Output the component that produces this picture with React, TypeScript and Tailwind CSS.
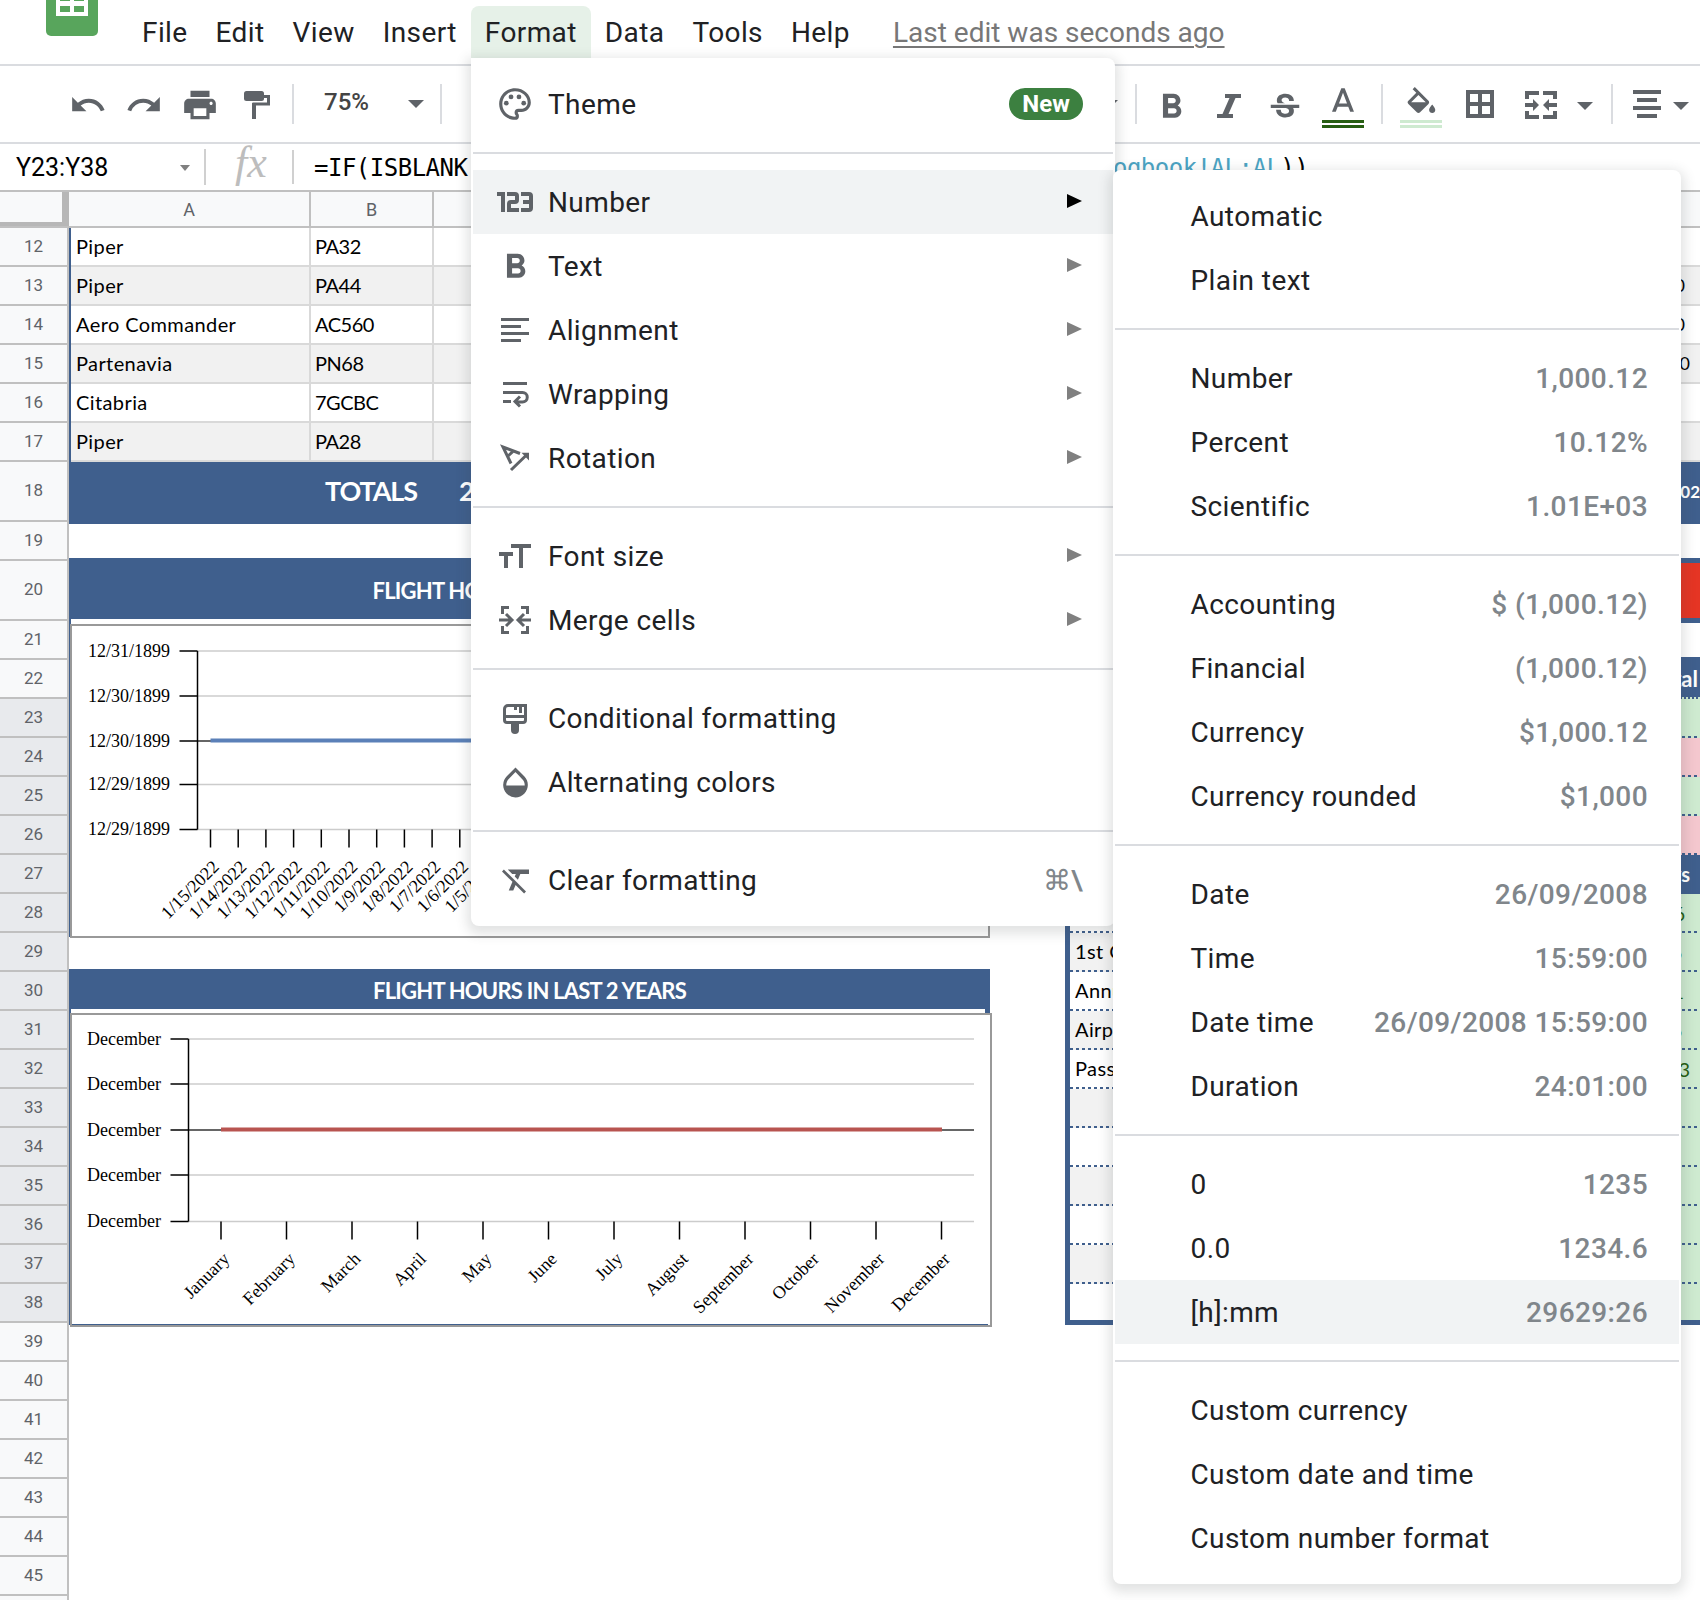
import type { ReactNode } from "react"
import {
    MdFormatBold,
    MdFormatClear,
    MdFormatColorFill,
    MdOpacity,
    MdOutlinePalette,
    MdPrint,
    MdRedo,
    MdStrikethroughS,
    MdUndo,
} from "react-icons/md"

const menuNames = ["File", "Edit", "View", "Insert", "Format", "Data", "Tools", "Help"]

const aircraft = [
    { row: 12, make: "Piper", model: "PA32", hours: "", pad: "" },
    { row: 13, make: "Piper", model: "PA44", hours: "0.0", pad: "pr-[15px]" },
    { row: 14, make: "Aero Commander", model: "AC560", hours: "0.0", pad: "pr-[15px]" },
    { row: 15, make: "Partenavia", model: "PN68", hours: "0.0", pad: "pr-[10px]" },
    { row: 16, make: "Citabria", model: "7GCBC", hours: "", pad: "" },
    { row: 17, make: "Piper", model: "PA28", hours: "", pad: "" },
]

const rowNumbers = Array.from({ length: 34 }, (_, i) => i + 12)

const currency = [
    { row: 23, label: "", value: "", pad: "", fill: "bg-[#ceead0]" },
    { row: 24, label: "", value: "", pad: "", fill: "bg-[#f4c7ce]" },
    { row: 25, label: "", value: "", pad: "", fill: "bg-[#ceead0]" },
    { row: 26, label: "", value: "", pad: "", fill: "bg-[#f4c7ce]" },
    { row: 27, label: "", value: "Days", pad: "pr-[10px]", fill: "bg-[#3f5f8d] text-white font-bold" },
    { row: 28, label: "", value: "6", pad: "pr-[15px]", fill: "bg-[#ceead0]" },
    { row: 29, label: "1st Class", value: "6", pad: "pr-[18px]", fill: "bg-[#ceead0]" },
    { row: 30, label: "Annual", value: "1", pad: "pr-[16px]", fill: "bg-[#ceead0]" },
    { row: 31, label: "Airport", value: "6", pad: "pr-[18px]", fill: "bg-[#ceead0]" },
    { row: 32, label: "Passport", value: "3", pad: "pr-[10px]", fill: "bg-[#ceead0]" },
    { row: 33, label: "", value: "", pad: "", fill: "bg-[#ceead0]" },
    { row: 34, label: "", value: "", pad: "", fill: "bg-[#ceead0]" },
    { row: 35, label: "", value: "", pad: "", fill: "bg-[#ceead0]" },
    { row: 36, label: "", value: "", pad: "", fill: "bg-[#ceead0]" },
    { row: 37, label: "", value: "", pad: "", fill: "bg-[#ceead0]" },
]

const numberFormats = [
    [["Automatic", ""], ["Plain text", ""]],
    [["Number", "1,000.12"], ["Percent", "10.12%"], ["Scientific", "1.01E+03"]],
    [["Accounting", "$ (1,000.12)"], ["Financial", "(1,000.12)"], ["Currency", "$1,000.12"], ["Currency rounded", "$1,000"]],
    [["Date", "26/09/2008"], ["Time", "15:59:00"], ["Date time", "26/09/2008 15:59:00"], ["Duration", "24:01:00"]],
    [["0", "1235"], ["0.0", "1234.6"], ["[h]:mm", "29629:26"]],
    [["Custom currency", ""], ["Custom date and time", ""], ["Custom number format", ""]],
]

function MenuIcon({ children }: { children: ReactNode }) {
    return (
        <svg width="40" height="40" viewBox="0 0 40 40" fill="none" stroke="currentColor" strokeWidth="3">
            {children}
        </svg>
    )
}

const icons = {
    number: (
        <MenuIcon>
            <path d="M2 12h6v18M12 12h8q2 0 2 2v4q0 2-2 2h-4q-2 0-2 2v6h10M26 12h8q2 0 2 2v12q0 2-2 2h-8M28 20h8" strokeWidth="4" />
        </MenuIcon>
    ),
    align: (
        <MenuIcon>
            <path d="M6 9.500h28M6 16.500h20M6 23.500h28M6 30.500h20" />
        </MenuIcon>
    ),
    wrap: (
        <MenuIcon>
            <path d="M8 9.500h24M8 18.500h19.500a4.500 4.500 0 0 1 0 9.500H20M8 27.500h8M25 22.500l-5 5 5 5" />
        </MenuIcon>
    ),
    rotation: (
        <MenuIcon>
            <path d="M16 25.500L8 9l17 6.500M12.500 18.500l6-5.500M16 32L31 17.500" />
            <path d="M26.500 14.700H34V22.500z" fill="currentColor" stroke="none" />
        </MenuIcon>
    ),
    size: (
        <MenuIcon>
            <path d="M16 10h20M26 10v22M4 18h14M11 18v14" strokeWidth="4" />
        </MenuIcon>
    ),
    merge: (
        <MenuIcon>
            <path d="M7.500 14V7.500H14M26 7.500h6.500V14M7.500 26v6.500H14M26 32.500h6.500V26M4 20h13M11 14l6 6-6 6M36 20H23M29 14l-6 6 6 6" />
        </MenuIcon>
    ),
    brush: (
        <MenuIcon>
            <path d="M30.500 7.500H13a3.500 3.500 0 0 0-3.500 3.500v11q0 2.500 2.500 2.500h16q2.500 0 2.500-2.500zM9.500 18.500h21M20.500 7v5M25.500 7v8" />
            <path d="M16 25h8v7a4 4 0 0 1-8 0z" fill="currentColor" stroke="none" />
        </MenuIcon>
    ),
}

function Divider() {
    return <div className="my-4 h-0.5 bg-[#dadce0]" />
}

function FormatItem({ icon, label, active, end }: { icon: ReactNode; label: string; active?: boolean; end?: ReactNode }) {
    return (
        <div className={`flex h-16 items-center pl-[22px] pr-[31px] ${active ? "bg-[#f1f3f4]" : ""}`}>
            <div className="flex w-10 justify-center text-[#5f6368]">{icon}</div>
            <span className="ml-[13px] flex-1 pt-0.5">{label}</span>
            {end !== undefined ? end : (
                <svg width="15" height="14" viewBox="0 0 15 14" className={`-mt-[3px] ${active ? "text-black" : "text-[#808080]"}`}>
                    <path d="M0 0l15 7-15 7z" fill="currentColor" />
                </svg>
            )}
        </div>
    )
}

function FormatMenu() {
    return (
        <div className="absolute left-[471px] top-[58px] z-10 w-[644px] rounded-b-lg rounded-tr-lg bg-white px-0.5 py-3.5 text-[28px] tracking-[0.4px] text-[#202124] shadow-[0_4px_12px_4px_rgba(60,64,67,0.15)]">
            <FormatItem
                icon={<MdOutlinePalette size={38} />}
                label="Theme"
                end={<span className="-mr-px flex h-8 w-[74px] items-center justify-center rounded-full bg-[#3c8040] text-2xl font-bold tracking-normal text-white">New</span>}
            />
            <Divider />
            <FormatItem icon={icons.number} label="Number" active />
            <FormatItem icon={<MdFormatBold size={41} className="mt-0.5 shrink-0" />} label="Text" />
            <FormatItem icon={icons.align} label="Alignment" />
            <FormatItem icon={icons.wrap} label="Wrapping" />
            <FormatItem icon={icons.rotation} label="Rotation" />
            <Divider />
            <FormatItem icon={icons.size} label="Font size" />
            <FormatItem icon={icons.merge} label="Merge cells" />
            <Divider />
            <FormatItem icon={icons.brush} label="Conditional formatting" end={null} />
            <FormatItem icon={<MdOpacity size={37} />} label="Alternating colors" end={null} />
            <Divider />
            <FormatItem
                icon={<MdFormatClear size={36} className="ml-1" />}
                label="Clear formatting"
                end={<span className="-mr-px pt-0.5 font-medium text-[#80868b]">⌘\</span>}
            />
        </div>
    )
}

function NumberMenu() {
    return (
        <div className="absolute left-[1113px] top-[170px] z-20 w-[568px] rounded-lg bg-white px-0.5 py-3.5 text-[28px] tracking-[0.4px] text-[#202124] shadow-[0_4px_12px_4px_rgba(60,64,67,0.15)]">
            {numberFormats.map((group, i) => (
                <div key={i}>
                    {i > 0 && <Divider />}
                    {group.map(([label, sample]) => (
                        <div key={label} className={`flex h-16 items-center justify-between pl-[75.5px] pr-[31px] pt-0.5 ${label === "[h]:mm" ? "bg-[#f1f3f4]" : ""}`}>
                            <span>{label}</span>
                            <span className="font-medium text-[#80868b]">{sample}</span>
                        </div>
                    ))}
                </div>
            ))}
        </div>
    )
}

function Caret({ className }: { className: string }) {
    return (
        <svg width="16" height="8" viewBox="0 0 16 8" className={`shrink-0 ${className}`}>
            <path d="M0 0h16L8 8z" fill="currentColor" />
        </svg>
    )
}

function Separator({ className }: { className: string }) {
    return <div className={`h-10 w-0.5 shrink-0 bg-[#dadce0] ${className}`} />
}

function MenuBar() {
    return (
        <div className="flex h-[66px] border-b-2 border-[#dadce0]">
            <svg width="52" height="36" viewBox="0 0 52 36" className="ml-[46px]">
                <path d="M0 0h52v31a5 5 0 0 1-5 5H5a5 5 0 0 1-5-5z" fill="#58a55c" />
                <path d="M10 0h32v16H10z" fill="#fff" />
                <path d="M14 0h10v1H14zM28 0h10v1H28zM14 6h10v6H14zM28 6h10v6H28z" fill="#58a55c" />
            </svg>
            <div className="ml-[30px] mt-1.5 flex text-[28px] tracking-[0.4px] text-[#202124]">
                {menuNames.map((name) => (
                    <div key={name} className={`flex h-[58px] items-center px-3.5 pb-[5px] ${name === "Format" ? "rounded-t-lg bg-[#e6f1e8]" : ""}`}>
                        {name}
                    </div>
                ))}
            </div>
            <div className="ml-[29px] mt-3 text-[28px] text-[#777] underline decoration-2 underline-offset-4">Last edit was seconds ago</div>
        </div>
    )
}

function ColorBars({ color }: { color: string }) {
    return (
        <div className="flex flex-col gap-0.5">
            <div className={`h-[3px] w-[42px] ${color}`} />
            <div className={`h-[3px] w-[42px] ${color}`} />
        </div>
    )
}

function Toolbar() {
    return (
        <div className="flex h-[78px] items-center border-b-2 border-[#dadce0] text-[#5f6368]">
            <MdUndo size={38} className="ml-[69px] mt-0.5" />
            <MdRedo size={38} className="ml-[18px] mt-0.5" />
            <MdPrint size={38} className="ml-[18px] mt-0.5" />
            <svg width="26" height="28" viewBox="0 0 26 28" className="ml-[25px] mt-0.5">
                <rect width="20" height="10" rx="2.500" fill="currentColor" />
                <path d="M20 5.500h4.500V13H10v15" fill="none" stroke="currentColor" strokeWidth="3" />
                <path d="M8 12h4v16H8z" fill="currentColor" />
            </svg>
            <Separator className="ml-[22px]" />
            <span className="-mt-1 ml-[30px] w-[46px] text-2xl font-medium text-[#444]">75%</span>
            <Caret className="ml-[38px]" />
            <Separator className="ml-4" />
            <Caret className="ml-[660px]" />
            <Separator className="ml-[17px]" />
            <MdFormatBold size={41} className="ml-[14px] mt-[7px]" />
            <svg width="24" height="24" viewBox="0 0 24 24" className="ml-[25px] mt-[3px]">
                <path d="M8 0h16v4h-5.500l-7 16H16v4H0v-4h5.500l7-16H8z" fill="currentColor" />
            </svg>
            <MdStrikethroughS size={38} className="ml-[25px] mt-[7px]" />
            <div className="ml-[18px] mt-[7px] flex flex-col items-center gap-2">
                <svg width="22" height="24" viewBox="5.500 3 13 14">
                    <path d="M11 3L5.500 17h2.250l1.120-3h6.250l1.120 3h2.250L13 3h-2zm-1.380 9L12 5.670 14.380 12H9.620z" fill="currentColor" />
                </svg>
                <ColorBars color="bg-[#275e12]" />
            </div>
            <Separator className="ml-[17px]" />
            <div className="ml-[17px] mt-1.5 flex h-[41px] flex-col items-center justify-between">
                <MdFormatColorFill size={37} className="h-[26px] shrink-0" viewBox="0 0 24 17" />
                <ColorBars color="bg-[#ceead0]" />
            </div>
            <svg width="28" height="28" viewBox="0 0 28 28" fill="none" stroke="currentColor" strokeWidth="4" className="ml-6">
                <path d="M2 2h24v24H2zM14 2v24M2 14h24" />
            </svg>
            <svg width="32" height="28" viewBox="0 0 32 28" fill="none" stroke="currentColor" strokeWidth="4" className="ml-[31px] mt-0.5">
                <path d="M2 8V2h12M18 2h12v6M2 20v6h12M18 26h12v-6M0 14h9M32 14h-9" />
                <path d="M8 8l6 6-6 6zM24 8l-6 6 6 6z" fill="currentColor" stroke="none" />
            </svg>
            <Caret className="ml-5 mt-1" />
            <Separator className="ml-[18px]" />
            <svg width="28" height="28" viewBox="0 0 28 28" fill="none" stroke="currentColor" strokeWidth="4" className="ml-5">
                <path d="M0 2h28M4 10h20M0 18h28M4 26h20" />
            </svg>
            <Caret className="ml-3 mt-1" />
        </div>
    )
}

function FormulaBar() {
    return (
        <div className="flex h-12 items-center border-b-2 border-[#c0c0c0] text-black">
            <span className="ml-4 w-[164px] text-[25px] leading-none">Y23:Y38</span>
            <svg width="10" height="6" viewBox="0 0 10 6" className="mt-0.5 text-[#808080]">
                <path d="M0 0h10L5 6z" fill="currentColor" />
            </svg>
            <div className="ml-3.5 h-9 w-0.5 bg-[#d0d0d0]" />
            <span className="ml-[29px] w-[57px] pb-2 font-['Liberation_Serif',serif] text-[44px] italic leading-none text-[#bdbdbd]">fx</span>
            <div className="h-[34px] w-0.5 bg-[#d0d0d0]" />
            <span className="ml-5 w-[785px] whitespace-nowrap pt-0.5 font-['DejaVu_Sans_Mono',monospace] text-[24px] leading-none tracking-[-0.5px]">=IF(ISBLANK</span>
            <span className="whitespace-nowrap pt-0.5 font-['DejaVu_Sans_Mono',monospace] text-[24px] leading-none tracking-[-0.5px]">
                <span className="text-[#4ba3c3]">Logbook!AL:AL</span>))
            </span>
        </div>
    )
}

function rowHeight(row: number) {
    return row === 18 || row === 20 ? "h-[60px]" : "h-[39px]"
}

function RowHeaders() {
    return (
        <div className="w-[69px] shrink-0 border-r-2 border-[#c0c0c0] bg-[#f8f9fa] text-[17px] text-[#5f6368]">
            {rowNumbers.map((row) => (
                <div
                    key={row}
                    className={`flex items-center justify-center border-b-2 border-[#c0c0c0] ${rowHeight(row)} ${row > 22 && row < 39 ? "bg-[#e8eaed]" : ""}`}
                >
                    {row}
                </div>
            ))}
        </div>
    )
}

const dateTicks = ["1/15/2022", "1/14/2022", "1/13/2022", "1/12/2022", "1/11/2022", "1/10/2022", "1/9/2022", "1/8/2022", "1/7/2022", "1/6/2022", "1/5/2022"]
const months = ["January", "February", "March", "April", "May", "June", "July", "August", "September", "October", "November", "December"]

type ChartProps = {
    height: number
    labels: string[]
    ys: number[]
    axisX: number
    gridEnd: number
    ticks: string[]
    tickStart: number
    tickStep: number
    seriesEnd: number
    color: string
}

function LineChart({ height, labels, ys, axisX, gridEnd, ticks, tickStart, tickStep, seriesEnd, color }: ChartProps) {
    const bottom = ys[4]
    return (
        <svg width="917" height={height} className="font-['Liberation_Serif',serif] text-[18px]" fill="#000">
            {ys.map((y, i) => (
                <g key={i}>
                    <line x1={axisX} x2={gridEnd} y1={y} y2={y} stroke={i === 2 ? "#333" : "#ccc"} strokeWidth="1.500" />
                    <line x1={axisX - 18} x2={axisX} y1={y} y2={y} stroke="#000" strokeWidth="1.500" />
                    <text x={axisX - 27.5} y={y + 5.5} textAnchor="end">{labels[i]}</text>
                </g>
            ))}
            <line x1={axisX} x2={axisX} y1={ys[0]} y2={bottom} stroke="#000" strokeWidth="1.500" />
            {ticks.map((tick, i) => {
                const x = tickStart + i * tickStep
                return (
                    <g key={tick}>
                        <line x1={x} x2={x} y1={bottom} y2={bottom + 18} stroke="#000" strokeWidth="1.500" />
                        <text transform={`translate(${x + 9.5} ${bottom + 38.5}) rotate(-45)`} textAnchor="end">{tick}</text>
                    </g>
                )
            })}
            <line x1={tickStart} x2={seriesEnd} y1={ys[2] - 0.5} y2={ys[2] - 0.5} stroke={color} strokeWidth="3.800" />
        </svg>
    )
}

function BarTitle({ children, className }: { children: ReactNode; className: string }) {
    return (
        <div className={`flex items-center justify-center bg-[#3f5f8d] text-[22px] font-bold tracking-[-0.78px] text-white ${className}`}>
            {children}
        </div>
    )
}

function ChartsColumn() {
    return (
        <div className="w-[925px] shrink-0">
            <BarTitle className="mt-[34px] h-[61px] w-[921px] pt-1">FLIGHT HOURS IN LAST 30 DAYS</BarTitle>
            <div className="h-[350px]">
                <div className="h-[318px] border-l-2 border-[#3f5f8d] pt-[5px]">
                    <div className="-ml-px h-[314px] w-[920px] border-2 border-[#999] bg-white">
                        <LineChart
                            height={310}
                            labels={["12/31/1899", "12/30/1899", "12/30/1899", "12/29/1899", "12/29/1899"]}
                            ys={[25, 70, 115, 158.500, 203.500]}
                            axisX={125.5}
                            gridEnd={900}
                            ticks={dateTicks}
                            tickStart={138.500}
                            tickStep={27.700}
                            seriesEnd={900}
                            color="#5b80b8"
                        />
                    </div>
                </div>
            </div>
            <BarTitle className="h-10 w-[921px] pt-0.5">FLIGHT HOURS IN LAST 2 YEARS</BarTitle>
            <div className="h-[316px] w-[921px] border-l-2 border-r-[5px] border-[#3f5f8d] pt-1">
                <div className="-ml-px h-[314px] w-[922px] border-2 border-[#999] bg-white">
                    <LineChart
                        height={309}
                        labels={["December", "December", "December", "December", "December"]}
                        ys={[24, 69, 115, 160, 206.500]}
                        axisX={116.500}
                        gridEnd={902}
                        ticks={months}
                        tickStart={149}
                        tickStep={65.500}
                        seriesEnd={870}
                        color="#b85450"
                    />
                    <div className="h-px w-[916px] bg-[#3f5f8d]" />
                </div>
            </div>
        </div>
    )
}

const dashes = "bg-[repeating-linear-gradient(90deg,#3f5f8d_0_3px,transparent_3px_6px)] bg-[length:100%_2px] bg-bottom bg-no-repeat"

function CurrencyColumn() {
    return (
        <div className="ml-[71px] flex-1 overflow-hidden text-[20px]">
            <div className="mt-[34px] h-[65px] border-y-[5px] border-[#3f5f8d] bg-[#e53524]" />
            <div className="mt-[34px] flex h-[42px] items-center justify-end border-b-2 border-dotted border-[#ceead0] bg-[#3f5f8d] pr-0.5 pt-0.5 text-[22px] font-bold text-white">Total</div>
            <div className="border-b-[5px] border-l-[5px] border-[#3f5f8d]">
                {currency.map(({ row, label, value, pad, fill }) => (
                    <div key={row} className={`flex h-[39px] ${row % 2 ? "bg-[#f2f2f2]" : "bg-white"}`}>
                        <div className={`flex w-[300px] items-center pb-1 pl-[5px] tracking-[0.4px] text-black ${dashes}`}>{label}</div>
                        <div className={`flex flex-1 items-center justify-end pb-0.5 text-[#275e12] ${pad} ${fill} ${dashes}`}>{value}</div>
                    </div>
                ))}
                <div className="flex h-9">
                    <div className="w-[300px]" />
                    <div className="flex-1 bg-[#ceead0]" />
                </div>
            </div>
        </div>
    )
}

function Sheet() {
    return (
        <div>
            <div className="flex h-9 border-b-2 border-[#c0c0c0] bg-[#f8f9fa] text-[18px] text-[#5f6368]">
                <div className="w-[69px] border-b-4 border-r-[7px] border-[#b7b7b7]" />
                <div className="flex w-[242px] items-center justify-center border-r-2 border-[#c0c0c0]">A</div>
                <div className="flex w-[123px] items-center justify-center border-r-2 border-[#c0c0c0]">B</div>
            </div>
            <div className="flex h-[1372px] overflow-hidden">
                <RowHeaders />
                <div className="flex-1 font-['Lato',sans-serif]">
                    <div className="border-l-2 border-[#3f5f8d] text-[20px] text-black">
                        {aircraft.map(({ row, make, model, hours, pad }) => (
                            <div key={row} className={`flex h-[39px] ${row % 2 ? "bg-[#f1f1f1]" : "bg-white"}`}>
                                <div className="flex w-60 items-center border-b-2 border-r-2 border-[#d9d9d9] pb-0.5 pl-[5px] tracking-[0.4px]">{make}</div>
                                <div className="flex w-[123px] items-center border-b-2 border-r-2 border-[#d9d9d9] pb-0.5 pl-1 tracking-[-0.5px]">{model}</div>
                                <div className={`flex flex-1 items-center justify-end border-b-2 border-[#d9d9d9] text-[18px] ${pad}`}>{hours}</div>
                            </div>
                        ))}
                    </div>
                    <div className="flex h-[62px] items-center overflow-hidden bg-[#3f5f8d] pb-[3px] text-[27px] font-bold text-white">
                        <span className="ml-[256px] w-[134px] tracking-[-1.1px]">TOTALS</span>
                        <span className="flex-1">20</span>
                        <span className="text-[17px]">02</span>
                    </div>
                    <div className="flex">
                        <ChartsColumn />
                        <CurrencyColumn />
                    </div>
                </div>
            </div>
        </div>
    )
}

export default function App() {
    return (
        <div className="relative h-[1600px] w-[1700px] overflow-hidden bg-white font-['Roboto',sans-serif]">
            <MenuBar />
            <Toolbar />
            <FormulaBar />
            <Sheet />
            <FormatMenu />
            <NumberMenu />
        </div>
    )
}
